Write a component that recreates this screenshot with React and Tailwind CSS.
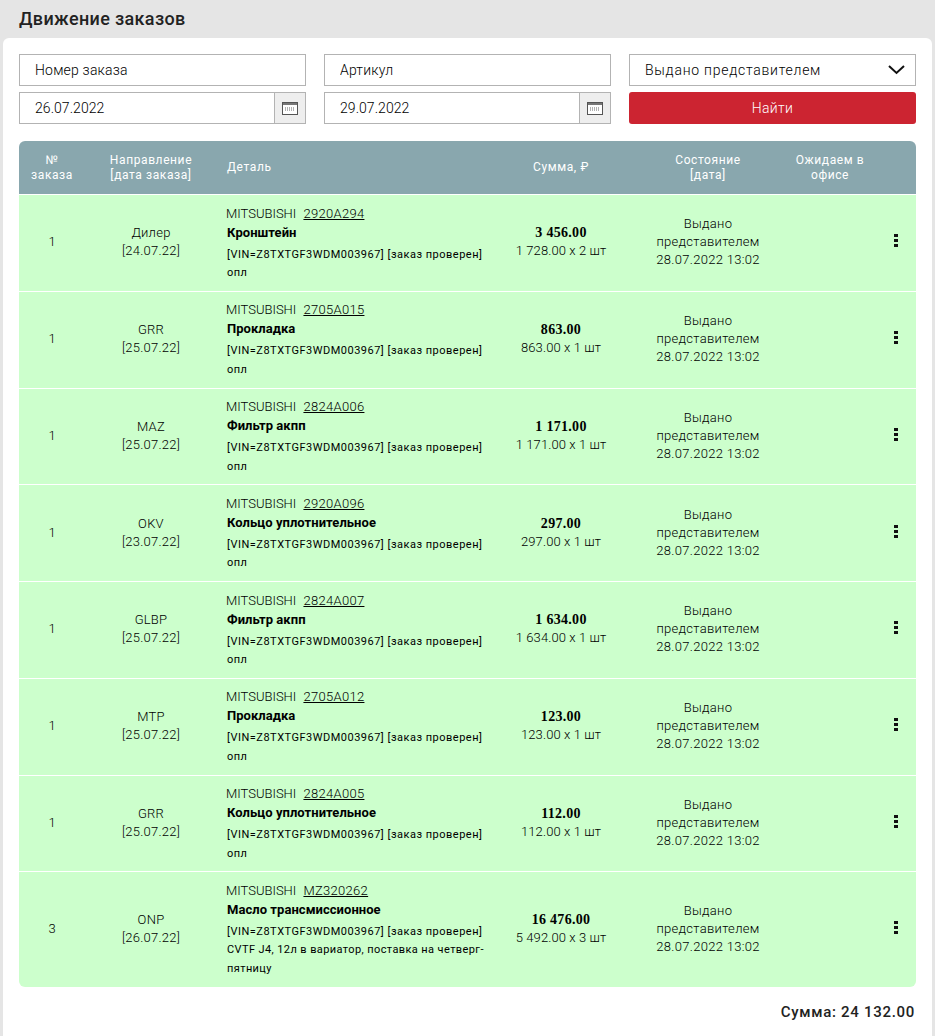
import React from "react";

const orders = [
  { qty: 1, dir: "Дилер", date: "[24.07.22]", art: "2920A294", name: "Кронштейн", total: "3 456.00", price: "1 728.00 x 2 шт", note: "опл" },
  { qty: 1, dir: "GRR", date: "[25.07.22]", art: "2705A015", name: "Прокладка", total: "863.00", price: "863.00 x 1 шт", note: "опл" },
  { qty: 1, dir: "MAZ", date: "[25.07.22]", art: "2824A006", name: "Фильтр акпп", total: "1 171.00", price: "1 171.00 x 1 шт", note: "опл" },
  { qty: 1, dir: "OKV", date: "[23.07.22]", art: "2920A096", name: "Кольцо уплотнительное", total: "297.00", price: "297.00 x 1 шт", note: "опл" },
  { qty: 1, dir: "GLBP", date: "[25.07.22]", art: "2824A007", name: "Фильтр акпп", total: "1 634.00", price: "1 634.00 x 1 шт", note: "опл" },
  { qty: 1, dir: "MTP", date: "[25.07.22]", art: "2705A012", name: "Прокладка", total: "123.00", price: "123.00 x 1 шт", note: "опл" },
  { qty: 1, dir: "GRR", date: "[25.07.22]", art: "2824A005", name: "Кольцо уплотнительное", total: "112.00", price: "112.00 x 1 шт", note: "опл" },
  { qty: 3, dir: "ONP", date: "[26.07.22]", art: "MZ320262", name: "Масло трансмиссионное", total: "16 476.00", price: "5 492.00 x 3 шт", note: "CVTF J4, 12л в вариатор, поставка на четверг-пятницу" },
];

const CalendarIcon = () => (
  <svg width="16" height="13" viewBox="0 0 16 13" fill="none">
    <rect x="0.5" y="0.5" width="15" height="12" fill="#fff" stroke="#555" />
    <rect x="1" y="1" width="14" height="2" fill="#777" />
    <path d="M3 6h1M5 6h1M7 6h1M9 6h1M11 6h1M13 6h0M3 8h1M5 8h1M7 8h1M9 8h1M11 8h1" stroke="#666" />
  </svg>
);

const DotsIcon = () => (
  <svg width="4" height="13" viewBox="0 0 4 13" fill="#111">
    <rect width="4" height="3" y="0" />
    <rect width="4" height="3" y="5" />
    <rect width="4" height="3" y="10" />
  </svg>
);

const DateInput = ({ value }) => (
  <div className="flex h-8 border border-[#b3b3b3] bg-white">
    <input
      readOnly
      defaultValue={value}
      className="min-w-0 flex-1 pl-[15px] text-[14px] tracking-[0.05px] text-black outline-none"
    />
    <div className="flex w-[31px] items-center justify-center border-l border-[#b3b3b3] bg-[#eeeeee]">
      <CalendarIcon />
    </div>
  </div>
);

const TextInput = ({ placeholder }) => (
  <input
    placeholder={placeholder}
    className="h-8 w-full border border-[#b3b3b3] bg-white pl-[15px] text-[14px] tracking-[0.2px] text-black outline-none placeholder:text-black"
  />
);

const OrderRow = ({ order }) => (
  <div className="grid grid-cols-[66px_132px_273px_142px_152px_92px_40px] bg-[#ccffcc] text-[13px] leading-[18px] text-black last:rounded-b-md">
    <div className="flex items-center justify-center pb-[1px]">{order.qty}</div>
    <div className="flex flex-col items-center justify-center pb-[1px] tracking-[0.25px]">
      <span>{order.dir}</span>
      <span>{order.date}</span>
    </div>
    <div className="pb-[8.25px] pl-[9px] pt-[8.5px]">
      <div className="leading-[19px]">
        MITSUBISHI <a className="ml-1 tracking-[0.3px] underline">{order.art}</a>
      </div>
      <div className="pl-px font-bold leading-[19px] tracking-[0.05px]">{order.name}</div>
      <div className="mt-[4px] pl-px text-[11px] font-normal leading-[18.5px]">
        <div className="tracking-[0.5px]">[VIN=Z8TXTGF3WDM003967] [заказ проверен]</div>
        <div className="tracking-[0.4px]">{order.note}</div>
      </div>
    </div>
    <div className="flex flex-col items-center justify-center pb-[1px]">
      <span className="font-['Liberation_Serif',serif] text-[14px] font-bold tracking-[0.3px]">{order.total}</span>
      <span className="tracking-[0.1px]">{order.price}</span>
    </div>
    <div className="flex items-center justify-center pb-[1px] text-center tracking-[0.3px]">
      <div>
        Выдано
        <br />
        представителем
        <br />
        28.07.2022 13:02
      </div>
    </div>
    <div />
    <div className="flex items-center justify-center pb-[4px]">
      <DotsIcon />
    </div>
  </div>
);

const App = () => {
  return (
    <div className="min-h-[1036px] bg-[#e5e5e5] px-[3px] font-['Roboto',sans-serif] font-light">
      <h1 className="flex h-[38px] items-center pb-[2px] pl-4 text-[18px] font-medium tracking-[0.35px] text-[#222]">
        Движение заказов
      </h1>
      <div className="rounded-t-md bg-white px-4 pt-4">
        <div className="grid grid-cols-3 gap-x-[18px] gap-y-[6px]">
          <TextInput placeholder="Номер заказа" />
          <TextInput placeholder="Артикул" />
          <div className="flex h-8 items-center justify-between border border-[#b3b3b3] bg-white pl-[15px] pr-[10px] text-[14px] tracking-[0.75px] text-black">
            <span>Выдано представителем</span>
            <svg width="17" height="10" viewBox="0 0 17 10" fill="none" stroke="#111" strokeWidth="2">
              <path d="M1 1l7.5 7L16 1" />
            </svg>
          </div>
          <DateInput value="26.07.2022" />
          <DateInput value="29.07.2022" />
          <button className="h-8 rounded-[3px] bg-[#cc2431] text-[14px] tracking-[0.3px] text-white">Найти</button>
        </div>

        <div className="mt-[17px] flex flex-col gap-y-px">
          <div className="grid h-[53px] grid-cols-[66px_132px_273px_142px_152px_92px_40px] items-center rounded-t-md bg-[#89a7ae] text-center text-[12px] font-normal leading-[15px] tracking-[0.6px] text-white">
            <div>
              №
              <br />
              заказа
            </div>
            <div>
              Направление
              <br />
              [дата заказа]
            </div>
            <div className="pl-[10px] text-left">Деталь</div>
            <div>Сумма, ₽</div>
            <div>
              Состояние
              <br />
              [дата]
            </div>
            <div>Ожидаем в офисе</div>
            <div />
          </div>
          {orders.map((order) => (
            <OrderRow key={order.art} order={order} />
          ))}
        </div>

        <div className="h-[50px] pr-px pt-[15px] text-right text-[15px] font-medium leading-[20px] tracking-[0.7px] text-[#222]">
          Сумма: 24 132.00
        </div>
      </div>
    </div>
  );
};

export default App;
